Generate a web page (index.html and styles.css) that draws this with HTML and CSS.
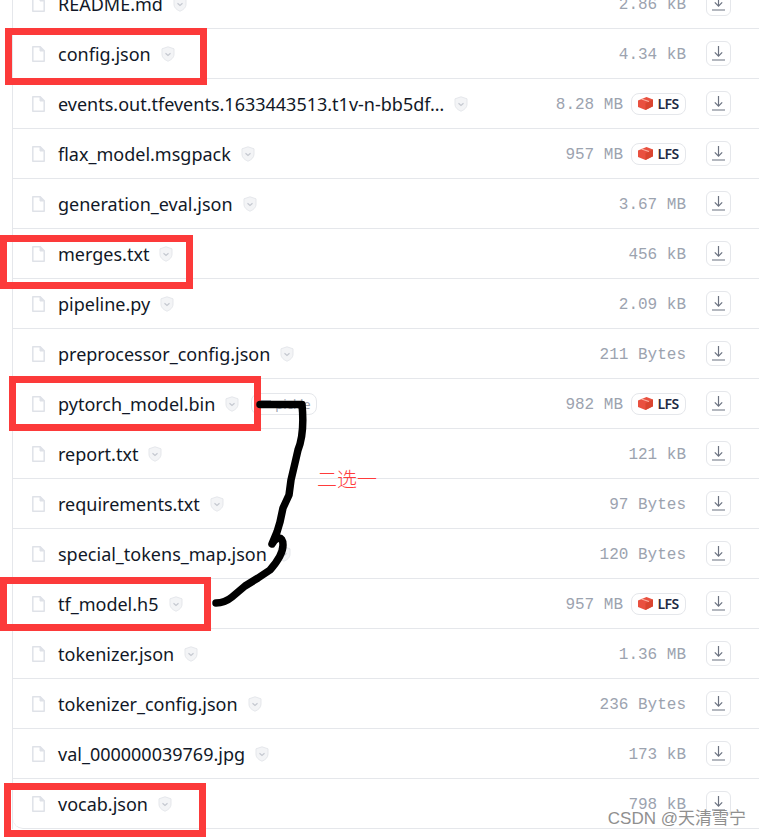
FILE: index.html
```html
<!DOCTYPE html>
<html lang="en">
<head>
<meta charset="utf-8">
<title>Files</title>
<link rel="stylesheet" href="styles.css">
</head>
<body>
<svg width="0" height="0" class="defs">
  <symbol id="file" viewBox="0 0 13 16"><path d="M.8.8h7.400l4 4v10.400H.8z" fill="#fff" stroke="#dfe2e8" stroke-width="1.500" stroke-linejoin="round"/><path d="M8 .8v4.200h4.200z" fill="#dfe2e8" stroke="#dfe2e8"/></symbol>
  <symbol id="shield" viewBox="0 0 14 16"><path d="M7 .8l6 2v5.200c0 3.600-2.600 5.800-6 7.200-3.400-1.400-6-3.600-6-7.200V2.800z" fill="#f3f4f6" stroke="#e5e7eb"/><path d="M4.500 7.200l2.500 2.200 2.500-2.200" fill="none" stroke="#c4c8d0" stroke-width="1.200"/></symbol>
  <symbol id="dl" viewBox="0 0 13 15"><path d="M6.500 0v10M2.800 6.300l3.700 3.900 3.700-3.900M0 14h13" fill="none" stroke="#6b7280" stroke-width="1.200"/></symbol>
  <symbol id="box" viewBox="0 0 15 13"><path d="M8.500 0L15 2.500v6.700L7.500 13 0 10V3.500z" fill="#e9503f"/><path d="M0 3.500L7.500 6.300V13l7.500-3.800V2.500L7.500 6.300z" fill="#d9442f"/><path d="M3.500 2L11 4.500" stroke="#f9b3a6" stroke-width="1.300"/></symbol>
  <symbol id="bars" viewBox="0 0 10 8"><path d="M0 1h10M0 4h10M0 7h10" stroke="#9ca3af" stroke-width="1.400"/></symbol>
</svg>
<main class="list">
  <div class="row"><svg class="ico"><use href="#file"/></svg><span class="name">README.md</span><svg class="shield"><use href="#shield"/></svg><span class="size">2.86 kB</span><a class="dl"><svg><use href="#dl"/></svg></a></div>
  <div class="row"><svg class="ico"><use href="#file"/></svg><span class="name">config.json</span><svg class="shield"><use href="#shield"/></svg><span class="size">4.34 kB</span><a class="dl"><svg><use href="#dl"/></svg></a></div>
  <div class="row"><svg class="ico"><use href="#file"/></svg><span class="name">events.out.tfevents.1633443513.t1v-n-bb5df…</span><svg class="shield"><use href="#shield"/></svg><span class="size">8.28 MB</span><span class="lfs"><svg><use href="#box"/></svg>LFS</span><a class="dl"><svg><use href="#dl"/></svg></a></div>
  <div class="row"><svg class="ico"><use href="#file"/></svg><span class="name">flax_model.msgpack</span><svg class="shield"><use href="#shield"/></svg><span class="size">957 MB</span><span class="lfs"><svg><use href="#box"/></svg>LFS</span><a class="dl"><svg><use href="#dl"/></svg></a></div>
  <div class="row"><svg class="ico"><use href="#file"/></svg><span class="name">generation_eval.json</span><svg class="shield"><use href="#shield"/></svg><span class="size">3.67 MB</span><a class="dl"><svg><use href="#dl"/></svg></a></div>
  <div class="row"><svg class="ico"><use href="#file"/></svg><span class="name">merges.txt</span><svg class="shield"><use href="#shield"/></svg><span class="size">456 kB</span><a class="dl"><svg><use href="#dl"/></svg></a></div>
  <div class="row"><svg class="ico"><use href="#file"/></svg><span class="name">pipeline.py</span><svg class="shield"><use href="#shield"/></svg><span class="size">2.09 kB</span><a class="dl"><svg><use href="#dl"/></svg></a></div>
  <div class="row"><svg class="ico"><use href="#file"/></svg><span class="name">preprocessor_config.json</span><svg class="shield"><use href="#shield"/></svg><span class="size">211 Bytes</span><a class="dl"><svg><use href="#dl"/></svg></a></div>
  <div class="row"><svg class="ico"><use href="#file"/></svg><span class="name">pytorch_model.bin</span><svg class="shield"><use href="#shield"/></svg><span class="pickle"><svg><use href="#bars"/></svg>pickle</span><span class="size">982 MB</span><span class="lfs"><svg><use href="#box"/></svg>LFS</span><a class="dl"><svg><use href="#dl"/></svg></a></div>
  <div class="row"><svg class="ico"><use href="#file"/></svg><span class="name">report.txt</span><svg class="shield"><use href="#shield"/></svg><span class="size">121 kB</span><a class="dl"><svg><use href="#dl"/></svg></a></div>
  <div class="row"><svg class="ico"><use href="#file"/></svg><span class="name">requirements.txt</span><svg class="shield"><use href="#shield"/></svg><span class="size">97 Bytes</span><a class="dl"><svg><use href="#dl"/></svg></a></div>
  <div class="row"><svg class="ico"><use href="#file"/></svg><span class="name">special_tokens_map.json</span><svg class="shield"><use href="#shield"/></svg><span class="size">120 Bytes</span><a class="dl"><svg><use href="#dl"/></svg></a></div>
  <div class="row"><svg class="ico"><use href="#file"/></svg><span class="name">tf_model.h5</span><svg class="shield"><use href="#shield"/></svg><span class="size">957 MB</span><span class="lfs"><svg><use href="#box"/></svg>LFS</span><a class="dl"><svg><use href="#dl"/></svg></a></div>
  <div class="row"><svg class="ico"><use href="#file"/></svg><span class="name">tokenizer.json</span><svg class="shield"><use href="#shield"/></svg><span class="size">1.36 MB</span><a class="dl"><svg><use href="#dl"/></svg></a></div>
  <div class="row"><svg class="ico"><use href="#file"/></svg><span class="name">tokenizer_config.json</span><svg class="shield"><use href="#shield"/></svg><span class="size">236 Bytes</span><a class="dl"><svg><use href="#dl"/></svg></a></div>
  <div class="row"><svg class="ico"><use href="#file"/></svg><span class="name">val_000000039769.jpg</span><svg class="shield"><use href="#shield"/></svg><span class="size">173 kB</span><a class="dl"><svg><use href="#dl"/></svg></a></div>
  <div class="row last"><svg class="ico"><use href="#file"/></svg><span class="name">vocab.json</span><svg class="shield"><use href="#shield"/></svg><span class="size">798 kB</span><a class="dl"><svg><use href="#dl"/></svg></a></div>
</main>
<div class="mark m1"></div>
<div class="mark m2"></div>
<div class="mark m3"></div>
<div class="mark m4"></div>
<div class="mark m5"></div>
<svg class="scribble" viewBox="0 0 759 839"><path d="M260 404.500H302C304 425 302 440 298 450L295 463 291 480 289 495 283 508 280 522 277 532 272 544C275 538 283 534 283 545C283 553 277 562 270 570L258 578 245 586 232 597C226 602 220 603 216 603" fill="none" stroke="#000" stroke-width="7.500" stroke-linecap="round" stroke-linejoin="round"/></svg>
<span class="note">二选一</span>
<span class="wm">CSDN @天清雪宁</span>
</body>
</html>
```
FILE: styles.css
```css
html, body { margin: 0; padding: 0; height: 839px; overflow: hidden; background: #fff; }
body { position: relative; font-family: "Noto Sans", "Liberation Sans", sans-serif; color: #111827; }
.defs { position: absolute; }
.list { margin: -21px 0 0 12px; width: 747px; border-left: 1px solid #e5e7eb; box-sizing: border-box; }
.row { height: 50px; box-sizing: border-box; border-bottom: 1px solid #e5e7eb; display: flex; align-items: center; padding: 0 28px 0 19px; }
.row.last { border-bottom-left-radius: 10px; }
.ico { width: 13px; height: 16px; margin-right: 13px; flex: none; }
.name { font-size: 18px; line-height: 24px; white-space: nowrap; color: #111827; }
.shield { width: 14px; height: 16px; margin-left: 10px; flex: none; }
.pickle { display: flex; align-items: center; gap: 4px; margin-left: 12px; height: 22px; box-sizing: border-box; font-size: 13px; color: #9ca3af; border: 1px solid #e5e7eb; border-radius: 8px; padding: 0 5px 0 9px; }
.pickle svg { width: 10px; height: 8px; }
.size { margin-left: auto; margin-top: 2px; font-family: "Liberation Mono", monospace; font-size: 16px; color: #9ca3af; white-space: pre; }
.lfs { display: flex; align-items: center; gap: 4px; margin-left: 8px; width: 55px; height: 22px; box-sizing: border-box; justify-content: center; border: 1px solid #e5e7eb; border-radius: 8px; font-size: 14px; font-weight: 600; letter-spacing: -.6px; color: #1f2a44; }
.lfs svg { width: 15px; height: 13px; }
.dl { width: 25px; height: 25px; margin-left: 20px; box-sizing: border-box; border: 1px solid #e5e7eb; border-radius: 6px; display: flex; align-items: center; justify-content: center; flex: none; }
.dl svg { width: 13px; height: 15px; }
.mark { position: absolute; border: 7px solid #fc3a3a; box-sizing: border-box; }
.m1 { left: 5px; top: 28px; width: 202px; height: 57px; }
.m2 { left: 0; top: 235px; width: 193px; height: 54px; }
.m3 { left: 9px; top: 376px; width: 252px; height: 55px; }
.m4 { left: 0; top: 577px; width: 211px; height: 54px; }
.m5 { left: 4px; top: 783px; width: 202px; height: 54px; }
.scribble { position: absolute; left: 0; top: 0; width: 759px; height: 839px; }
.note { position: absolute; left: 317px; top: 468px; font-family: "Noto Sans CJK SC", sans-serif; font-size: 20px; line-height: 22px; color: #ff3b3b; font-weight: 300; }
.wm { position: absolute; right: 13px; top: 808px; font-family: "Liberation Sans", "Noto Sans CJK SC", sans-serif; font-size: 17px; line-height: 22px; color: #8a8a8a; opacity: .95; }
```
